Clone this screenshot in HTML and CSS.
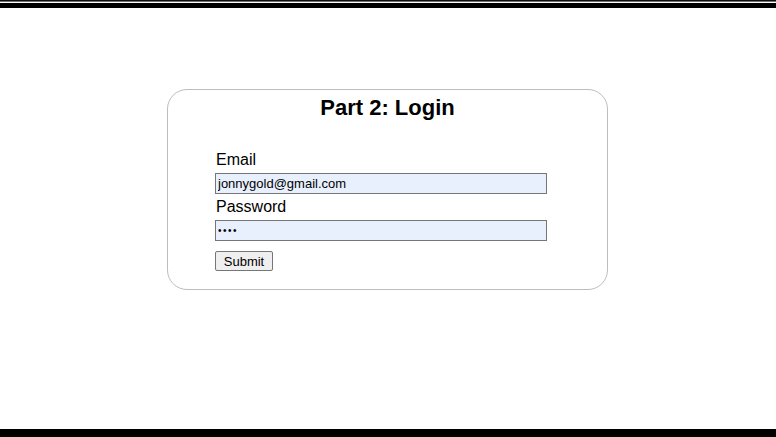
FILE: index.html
```html
<!DOCTYPE html>
<html>
<head>
<meta charset="utf-8">
<link rel="stylesheet" href="styles.css">
</head>
<body>
<div class="topbar"><div class="t1"></div><div class="t2"></div><div class="t3"></div><div class="t4"></div></div>
<main class="page">
  <div class="card">
    <h2 class="title">Part 2: Login</h2>
    <form class="form">
      <label class="label" for="email">Email</label>
      <input class="field email" id="email" type="text" value="jonnygold@gmail.com">
      <label class="label pw" for="pw">Password</label>
      <input class="field" id="pw" type="password" value="1234">
      <div class="actions"><button class="btn" type="button">Submit</button></div>
    </form>
  </div>
</main>
<div class="bottombar"></div>
</body>
</html>
```

FILE: styles.css
```css
html, body {
  margin: 0;
  padding: 0;
  background: #fff;
  font-family: "Liberation Sans", Arial, sans-serif;
  color: #000;
}
body {
  height: 437px;
  display: flex;
  flex-direction: column;
  overflow: hidden;
}
.topbar { flex: none; }
.t1 { height: 1px; background: #111; }
.t2 { height: 1px; background: #6b7378; }
.t3 { height: 1px; background: #fff; }
.t4 { height: 5px; background: #000; }
.page {
  flex: 1;
  display: flex;
  justify-content: center;
  align-items: flex-start;
  padding: 81px 1px 0 0;
}
.card {
  width: 439px;
  border: 1px solid #bdbdbd;
  border-radius: 20px;
  padding: 5px 0 18px 0;
  box-sizing: content-box;
}
.title {
  margin: 0;
  text-align: center;
  font-size: 22px;
  font-weight: bold;
  line-height: 25px;
}
.form {
  display: flex;
  flex-direction: column;
  align-items: flex-start;
  padding: 31px 0 0 47px;
}
.label {
  font-size: 16px;
  line-height: 18px;
  padding-left: 1px;
}
.label.pw { margin-top: 4px; }
.field {
  margin: 4px 0 0 0;
  width: 332px;
  height: 21px;
  box-sizing: border-box;
  border: 1px solid #767676;
  background: #e8f0fe;
  font-family: "Liberation Sans", Arial, sans-serif;
  font-size: 13px;
  padding: 1px 2px;
  color: #000;
  outline: none;
}
#pw { margin-top: 4px; font-size: 10px; letter-spacing: 1.5px; }
.actions { margin-top: 10px; }
.btn {
  font-family: "Liberation Sans", Arial, sans-serif;
  font-size: 13px;
  width: 58px;
  height: 20px;
  padding: 0;
  background: #efefef;
  border: 1px solid #767676;
  border-radius: 2px;
  color: #000;
}
.bottombar {
  flex: none;
  height: 8px;
  background: #000;
}
```
